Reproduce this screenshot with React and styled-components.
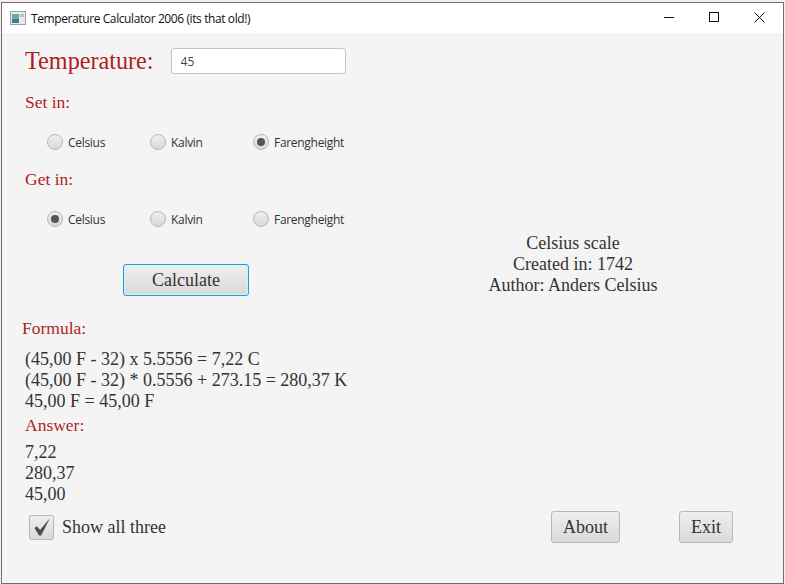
import React from 'react';
import styled, { createGlobalStyle } from 'styled-components';

const GlobalStyle = createGlobalStyle`
  html, body {
    margin: 0;
    padding: 0;
    background: #f1f1f1;
  }
  * {
    box-sizing: border-box;
  }
`;

const serif = `"Liberation Serif", "Times New Roman", serif`;
const sans = `"Open Sans", "Noto Sans", sans-serif`;

export default function App() {
  return (
    <>
      <GlobalStyle />
      <Window>
        <TitleBar>
          <AppIcon width="16" height="14" viewBox="0 0 16 14">
            <rect x="0.5" y="0.5" width="15" height="13" fill="#e8eced" stroke="#9aa4a7" />
            <rect x="2" y="3" width="7" height="9" fill="#6aa8a0" />
            <rect x="2" y="8" width="7" height="4" fill="#3f7f8f" />
            <rect x="10" y="3" width="4" height="3" fill="#b4c0c4" />
          </AppIcon>
          <Title>Temperature Calculator 2006 (its that old!)</Title>
          <WindowButtons>
            <WindowButton>
              <svg width="10" height="10" viewBox="0 0 10 10">
                <path d="M0 5.5h10" stroke="#111" strokeWidth="1" />
              </svg>
            </WindowButton>
            <WindowButton>
              <svg width="10" height="10" viewBox="0 0 10 10">
                <rect x="0.5" y="0.5" width="9" height="9" fill="none" stroke="#111" />
              </svg>
            </WindowButton>
            <WindowButton>
              <svg width="13" height="11" viewBox="0 0 13 11">
                <path d="M2.5 0.5l10 10M12.5 0.5l-10 10" stroke="#111" strokeWidth="1" />
              </svg>
            </WindowButton>
          </WindowButtons>
        </TitleBar>
        <Content>
          <Columns>
            <LeftColumn>
              <TemperatureRow>
                <BigLabel>Temperature:</BigLabel>
                <TextInput defaultValue="45" />
              </TemperatureRow>
              <SectionLabel $top={17}>Set in:</SectionLabel>
              <RadioRow $top={19}>
                <Radio label="Celsius" />
                <Radio label="Kalvin" />
                <Radio label="Farengheight" checked />
              </RadioRow>
              <SectionLabel $top={16}>Get in:</SectionLabel>
              <RadioRow $top={19}>
                <Radio label="Celsius" checked />
                <Radio label="Kalvin" />
                <Radio label="Farengheight" />
              </RadioRow>
              <CalculateButton>Calculate</CalculateButton>
            </LeftColumn>
            <InfoColumn>
              <div>Celsius scale</div>
              <div>Created in: 1742</div>
              <div>Author: Anders Celsius</div>
            </InfoColumn>
          </Columns>
          <FormulaLabel>Formula:</FormulaLabel>
          <TextBlock $top={10}>
            <div>(45,00 F - 32) x 5.5556 = 7,22 C</div>
            <div>(45,00 F - 32) * 0.5556 + 273.15 = 280,37 K</div>
            <div>45,00 F = 45,00 F</div>
          </TextBlock>
          <SectionLabel $top={2}>Answer:</SectionLabel>
          <TextBlock $top={6}>
            <div>7,22</div>
            <div>280,37</div>
            <div>45,00</div>
          </TextBlock>
          <BottomBar>
            <CheckLabel>
              <CheckBox>
                <svg width="23" height="23" viewBox="0 0 23 23">
                  <path d="M4.5 12L7 10.3 10 14 20 2 11.2 19.5H9z" fill="#4d4d4d" />
                </svg>
              </CheckBox>
              Show all three
            </CheckLabel>
            <BottomButtons>
              <PlainButton $width={69}>About</PlainButton>
              <PlainButton $width={54}>Exit</PlainButton>
            </BottomButtons>
          </BottomBar>
        </Content>
      </Window>
    </>
  );
}

function Radio({ label, checked }) {
  return (
    <RadioItem>
      <RadioCircle $checked={checked} />
      {label}
    </RadioItem>
  );
}

const Window = styled.div`
  width: 783px;
  height: 582px;
  margin: 2px 0 0 1px;
  border: 1px solid #6e6e6e;
  display: flex;
  flex-direction: column;
  background: #f4f4f4;
  overflow: hidden;
`;

const TitleBar = styled.div`
  height: 30px;
  flex-shrink: 0;
  background: #fff;
  display: flex;
  align-items: center;
  padding-left: 8px;
  font-family: ${sans};
  font-size: 12px;
  color: #111;
`;

const AppIcon = styled.svg`
  margin-right: 5px;
`;

const Title = styled.span`
  flex: 1;
  letter-spacing: -0.4px;
`;

const WindowButtons = styled.div`
  display: flex;
  align-self: flex-start;
  padding-right: 2px;
`;

const WindowButton = styled.div`
  width: 45px;
  height: 28px;
  display: flex;
  align-items: center;
  justify-content: center;
`;

const Content = styled.div`
  flex: 1;
  padding: 15px 0 0 23px;
  font-family: ${serif};
  color: #333;
`;

const Columns = styled.div`
  display: flex;
`;

const LeftColumn = styled.div`
  width: 323px;
  flex-shrink: 0;
`;

const InfoColumn = styled.div`
  width: 300px;
  margin: 185px 0 0 75px;
  font-size: 18px;
  line-height: 21px;
  text-align: center;
`;

const TemperatureRow = styled.div`
  display: flex;
  align-items: center;
  gap: 17px;
  height: 26px;
`;

const BigLabel = styled.div`
  font-size: 24.2px;
  color: #b01e1e;
`;

const TextInput = styled.input`
  width: 175px;
  height: 26px;
  padding: 0 9px;
  border: 1px solid #c4c4c4;
  border-radius: 3px;
  background: #fff;
  font-family: ${sans};
  font-size: 12px;
  color: #444;
  outline: none;
`;

const SectionLabel = styled.div`
  margin-top: ${(props) => props.$top}px;
  font-size: 17.5px;
  line-height: 22px;
  color: #b01e1e;
`;

const RadioRow = styled.div`
  display: grid;
  grid-template-columns: repeat(3, 103px);
  margin: ${(props) => props.$top}px 0 0 22px;
`;

const RadioItem = styled.div`
  display: flex;
  align-items: center;
  gap: 5px;
  height: 20px;
  font-family: ${sans};
  font-size: 12px;
  letter-spacing: -0.3px;
  color: #333;
  white-space: nowrap;
`;

const RadioCircle = styled.span`
  width: 16px;
  height: 16px;
  border-radius: 50%;
  border: 1px solid #b8b8b8;
  background: linear-gradient(#efefef, #d8d8d8);
  flex-shrink: 0;
  display: flex;
  align-items: center;
  justify-content: center;

  &::after {
    content: '';
    display: ${(props) => (props.$checked ? 'block' : 'none')};
    width: 8px;
    height: 8px;
    border-radius: 50%;
    background: #555;
  }
`;

const CalculateButton = styled.button`
  display: block;
  width: 126px;
  height: 32px;
  margin: 35px 0 0 98px;
  padding: 0;
  border: 1px solid #12a4d8;
  border-radius: 3px;
  box-shadow: inset 0 0 0 1px #d7eef7;
  background: linear-gradient(#efefef, #d9d9d9);
  font-family: ${serif};
  font-size: 18px;
  color: #333;
`;

const FormulaLabel = styled.div`
  margin: 21px 0 0 -3px;
  font-size: 17.5px;
  line-height: 22px;
  color: #b01e1e;
`;

const TextBlock = styled.div`
  margin-top: ${(props) => props.$top}px;
  font-size: 18px;
  line-height: 21px;
`;

const BottomBar = styled.div`
  display: flex;
  justify-content: space-between;
  align-items: center;
  margin: 6px 50px 0 4px;
  height: 32px;
`;

const CheckLabel = styled.div`
  display: flex;
  align-items: center;
  gap: 8px;
  font-size: 18px;
`;

const CheckBox = styled.span`
  width: 25px;
  height: 25px;
  border: 1px solid #b8b8b8;
  border-radius: 2px;
  background: linear-gradient(#efefef, #d9d9d9);
  display: flex;
  align-items: center;
  justify-content: center;
`;

const BottomButtons = styled.div`
  display: flex;
  gap: 59px;
`;

const PlainButton = styled.button`
  width: ${(props) => props.$width}px;
  height: 32px;
  padding: 0;
  border: 1px solid #b8b8b8;
  border-radius: 3px;
  background: linear-gradient(#efefef, #d9d9d9);
  font-family: ${serif};
  font-size: 18px;
  color: #333;
`;
